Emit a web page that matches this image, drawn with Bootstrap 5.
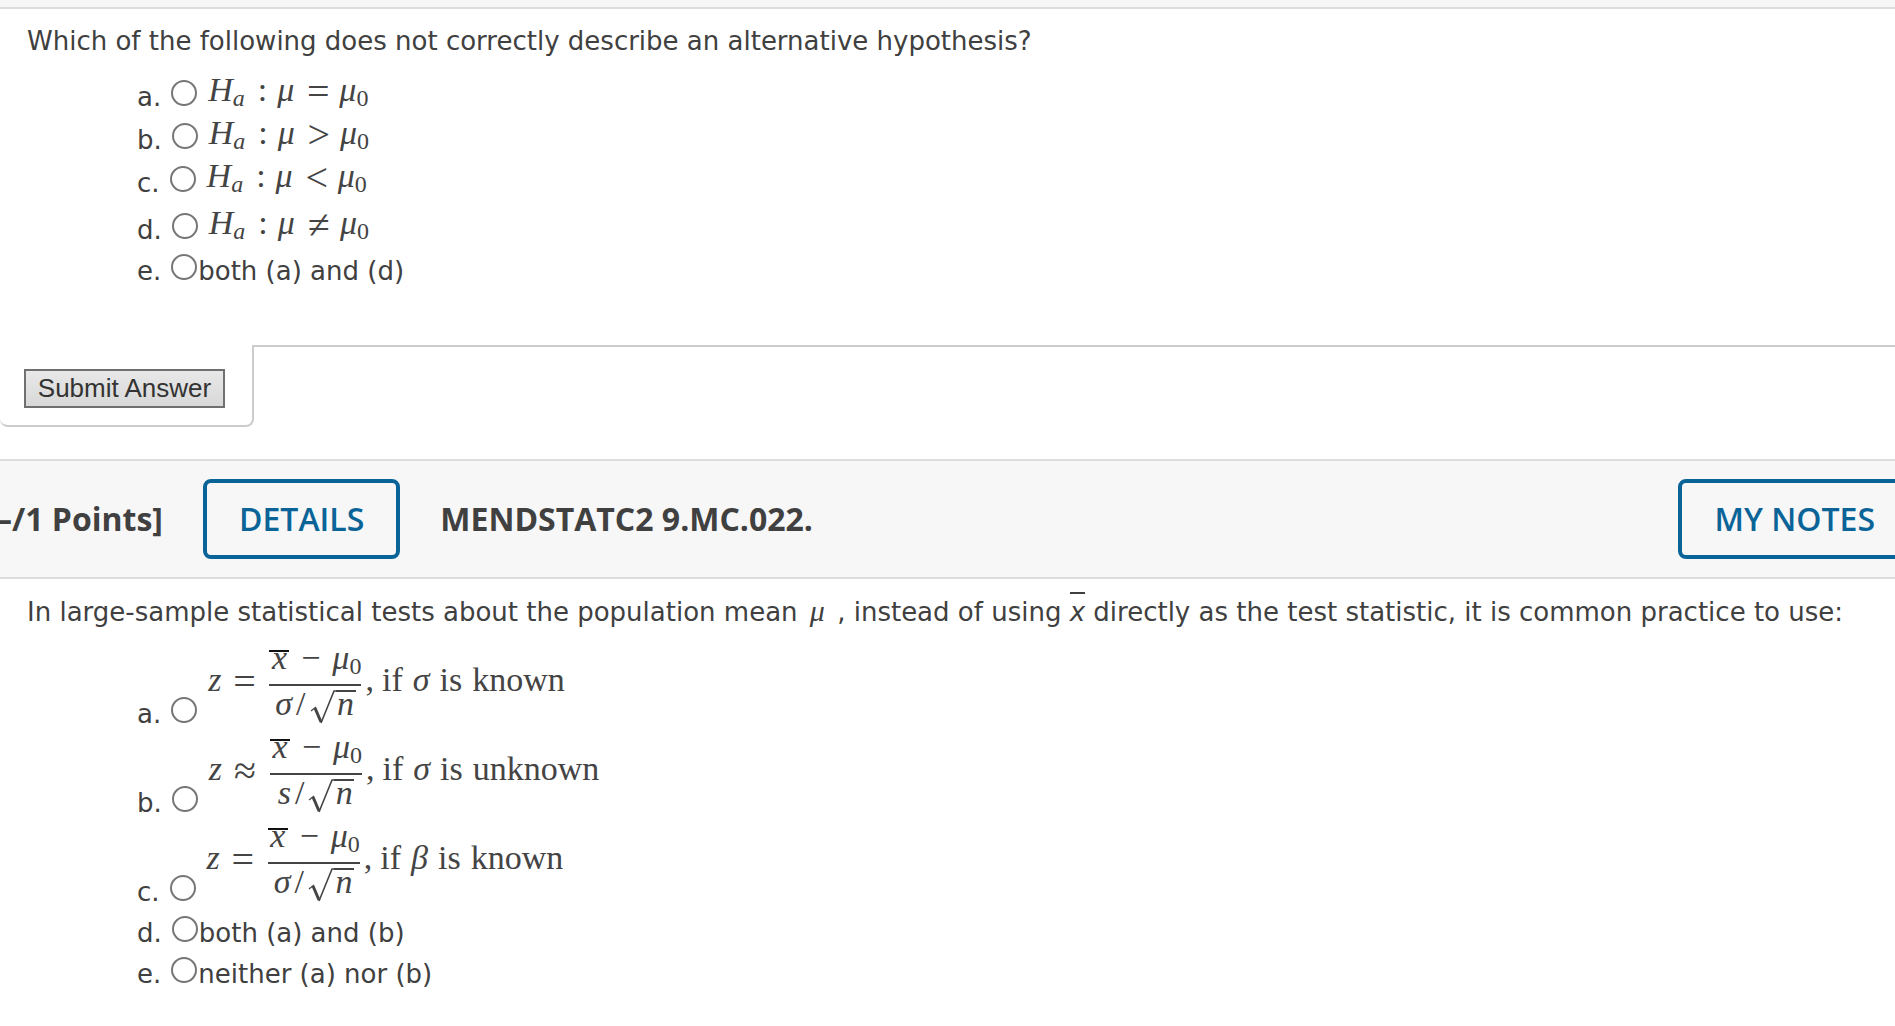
<!DOCTYPE html>
<html lang="en">
<head>
<meta charset="utf-8">
<meta name="viewport" content="width=device-width, initial-scale=1">
<title>MENDSTATC2 9.MC.022.</title>
<link href="https://cdn.jsdelivr.net/npm/bootstrap@5.3.0/dist/css/bootstrap.min.css" rel="stylesheet">
<style>
body { font-family: "DejaVu Sans", Verdana, sans-serif; font-size: 26px; line-height: 32px; color: #404040; background: #fff; overflow-x: hidden; }
.bar-end { height: 9px; background: #f7f7f7; border-bottom: 2px solid #ddd; }
.prompt { padding: 16px 0 0 27px; }
.choices { padding: 13px 0 0 137px; }
.choice { min-height: 41px; }
.choice.eq { min-height: 43px; }
.choice.neq { min-height: 47px; }
.choice.frac-row { min-height: 89px; }
.choice .form-radio { appearance: none; width: 26px; height: 26px; border: 2px solid #767676; border-radius: 50%; background: #fff; margin: 0 1px 7px 10px; flex: none; }
.choice .form-radio:checked { box-shadow: inset 0 0 0 5px #fff; background: #0b6497; }
.formula { font-family: "Liberation Serif", "Times New Roman", serif; font-size: 34px; line-height: 36px; color: #444; margin-left: 10px; white-space: nowrap; }
.formula i, .formula span { display: inline-block; }
.formula sub { font-size: 24px; line-height: 0; bottom: auto; vertical-align: -5px; }
.hyp { margin-bottom: 5px; }
.hyp .colon { margin: 0 10px 0 13px; }
.formula .rel { width: 24px; font-size: 40px; line-height: 0; text-align: center; vertical-align: -4px; }
.hyp .rel { margin: 0 9px 0 12px; }
.side { margin-bottom: 32px; }
.side .rel { margin: 0 13px 0 11px; }
.side .word { margin-left: 10px; }
.fraction { width: 92px; line-height: 28px; margin-bottom: 5px; }
.top-part { padding-bottom: 12px; border-bottom: 2px solid #444; }
.top-part .bar-x { border-top: 2px solid #111; line-height: 12px; width: 20px; text-align: center; }
.bottom-part { padding-top: 4px; height: 39px; }
.root-n { border-top: 2px solid #444; line-height: 24px; width: 20px; text-align: center; }
.tab-rule { border-top: 2px solid #ccc; }
.submit-row { margin-top: 58px; }
.submit-tab { width: 254px; padding: 24px 0 17px 24px; border: solid #ccc; border-width: 0 2px 2px 0; border-radius: 0 0 8px 8px; }
.submit-btn { width: 201px; height: 39px; padding: 0 0 2px; border: 2px solid #707070; border-radius: 0; background: linear-gradient(#e8e8e8, #d8d8d8); font: 26px/32px "Liberation Sans", Arial, sans-serif; color: #333; }
.question-bar { margin-top: 32px; height: 120px; background: #f7f7f7; border: solid #ddd; border-width: 2px 0; font: 600 32px/44px "Open Sans", sans-serif; }
.points { width: 166px; margin: 0 41px 0 -4px; }
.bar-btn { height: 80px; padding: 0 32px; border: 4px solid #0b6497; border-radius: 8px; background: transparent; color: #0b6497; font: inherit; white-space: nowrap; }
.notes { margin-right: -16px; }
.title { margin-left: 40px; }
.mu { font: italic 30px/32px "Liberation Serif", serif; margin: 0 4px; }
.mean-x { display: inline-block; border-top: 2px solid #404040; line-height: 26px; padding-top: 5px; margin-top: -5px; }
</style>
<script src="https://cdn.jsdelivr.net/npm/bootstrap@5.3.0/dist/js/bootstrap.bundle.min.js"></script>
</head>
<body>
<svg class="d-none" xmlns="http://www.w3.org/2000/svg">
  <symbol id="radical" viewBox="0 0 26 35"><path d="M1 21l5-4" fill="none" stroke="#444" stroke-width="1.2"/><path d="M5 18l6 14" fill="none" stroke="#444" stroke-width="3"/><path d="M11 33L24 1h2" fill="none" stroke="#444" stroke-width="1.6"/></symbol>
</svg>
<div class="bar-end"></div>
<main>
<section>
  <div class="prompt">Which of the following does not correctly describe an alternative hypothesis?</div>
  <div class="choices">
    <div class="choice eq d-flex align-items-end"><span>a.</span><input class="form-radio" type="radio" name="q1" id="q1a"><label class="formula hyp" for="q1a"><i>H<sub>a</sub></i><span class="colon">:</span><i>μ</i><span class="rel">=</span><i>μ</i><sub>0</sub></label></div>
    <div class="choice eq d-flex align-items-end"><span>b.</span><input class="form-radio" type="radio" name="q1" id="q1b"><label class="formula hyp" for="q1b"><i>H<sub>a</sub></i><span class="colon">:</span><i>μ</i><span class="rel">&gt;</span><i>μ</i><sub>0</sub></label></div>
    <div class="choice eq d-flex align-items-end"><span>c.</span><input class="form-radio" type="radio" name="q1" id="q1c"><label class="formula hyp" for="q1c"><i>H<sub>a</sub></i><span class="colon">:</span><i>μ</i><span class="rel">&lt;</span><i>μ</i><sub>0</sub></label></div>
    <div class="choice neq d-flex align-items-end"><span>d.</span><input class="form-radio" type="radio" name="q1" id="q1d"><label class="formula hyp" for="q1d"><i>H<sub>a</sub></i><span class="colon">:</span><i>μ</i><span class="rel">≠</span><i>μ</i><sub>0</sub></label></div>
    <div class="choice d-flex align-items-end"><span>e.</span><input class="form-radio" type="radio" name="q1" id="q1e"><label for="q1e">both (a) and (d)</label></div>
  </div>
  <div class="submit-row d-flex align-items-start">
    <div class="submit-tab flex-shrink-0 d-flex"><button class="submit-btn" type="button">Submit Answer</button></div>
    <div class="tab-rule flex-grow-1"></div>
  </div>
</section>
<section>
  <div class="question-bar d-flex align-items-center">
    <div class="points flex-shrink-0 fw-bold text-nowrap">–/1 Points]</div>
    <button class="bar-btn" type="button">DETAILS</button>
    <div class="title fw-bold text-nowrap">MENDSTATC2 9.MC.022.</div>
    <button class="bar-btn notes ms-auto" type="button">MY NOTES</button>
  </div>
  <div class="prompt">In large-sample statistical tests about the population mean <span class="mu">μ</span> , instead of using <i class="mean-x">x</i> directly as the test statistic, it is common practice to use:</div>
  <div class="choices">
    <div class="choice frac-row d-flex align-items-end"><span>a.</span><input class="form-radio" type="radio" name="q2" id="q2a"><label class="formula d-flex align-items-end" for="q2a"><span class="side"><i>z</i><span class="rel">=</span></span><span class="fraction"><span class="top-part d-flex justify-content-between align-items-baseline"><i class="bar-x">x</i><span>−</span><span><i>μ</i><sub>0</sub></span></span><span class="bottom-part d-flex justify-content-center"><i>σ</i><span class="px-1">/</span><svg width="26" height="35"><use href="#radical"/></svg><i class="root-n">n</i></span></span><span class="side"><span class="ms-1">,</span><span class="ms-2">if</span><i class="word">σ</i><span class="word">is</span><span class="word">known</span></span></label></div>
    <div class="choice frac-row d-flex align-items-end"><span>b.</span><input class="form-radio" type="radio" name="q2" id="q2b"><label class="formula d-flex align-items-end" for="q2b"><span class="side"><i>z</i><span class="rel">≈</span></span><span class="fraction"><span class="top-part d-flex justify-content-between align-items-baseline"><i class="bar-x">x</i><span>−</span><span><i>μ</i><sub>0</sub></span></span><span class="bottom-part d-flex justify-content-center"><i>s</i><span class="px-1">/</span><svg width="26" height="35"><use href="#radical"/></svg><i class="root-n">n</i></span></span><span class="side"><span class="ms-1">,</span><span class="ms-2">if</span><i class="word">σ</i><span class="word">is</span><span class="word">unknown</span></span></label></div>
    <div class="choice frac-row d-flex align-items-end"><span>c.</span><input class="form-radio" type="radio" name="q2" id="q2c"><label class="formula d-flex align-items-end" for="q2c"><span class="side"><i>z</i><span class="rel">=</span></span><span class="fraction"><span class="top-part d-flex justify-content-between align-items-baseline"><i class="bar-x">x</i><span>−</span><span><i>μ</i><sub>0</sub></span></span><span class="bottom-part d-flex justify-content-center"><i>σ</i><span class="px-1">/</span><svg width="26" height="35"><use href="#radical"/></svg><i class="root-n">n</i></span></span><span class="side"><span class="ms-1">,</span><span class="ms-2">if</span><i class="word">β</i><span class="word">is</span><span class="word">known</span></span></label></div>
    <div class="choice d-flex align-items-end"><span>d.</span><input class="form-radio" type="radio" name="q2" id="q2d"><label for="q2d">both (a) and (b)</label></div>
    <div class="choice d-flex align-items-end"><span>e.</span><input class="form-radio" type="radio" name="q2" id="q2e"><label for="q2e">neither (a) nor (b)</label></div>
  </div>
</section>
</main>
</body>
</html>
